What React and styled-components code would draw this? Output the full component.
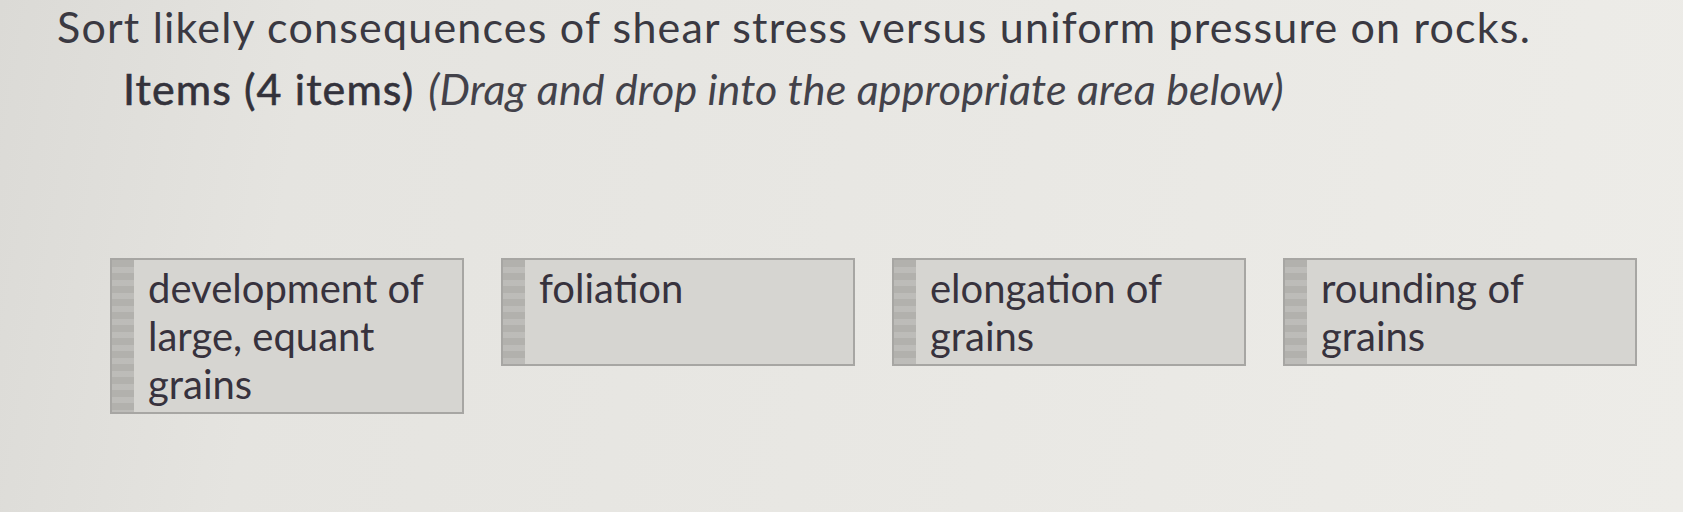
import styled, { createGlobalStyle } from 'styled-components';

const GlobalStyle = createGlobalStyle`
  html, body {
    margin: 0;
    padding: 0;
  }
  body {
    background: #e7e6e2;
    font-family: Lato, "Open Sans", sans-serif;
  }
`;

const Page = styled.div`
  width: 1683px;
  height: 512px;
  box-sizing: border-box;
  padding: 3px 0 0 57px;
  background: linear-gradient(100deg, #dbdad6 0%, #e5e4e0 18%, #e9e8e4 60%, #edece8 100%);
  overflow: hidden;
`;

const Question = styled.h1`
  margin: 0;
  font-size: 43px;
  line-height: 48px;
  font-weight: 400;
  color: #3a3942;
  letter-spacing: 1.2px;
  white-space: nowrap;
`;

const ItemsHeading = styled.h2`
  margin: 14px 0 0 66px;
  font-size: 43px;
  line-height: 48px;
  font-weight: 400;
  color: #33323b;
  letter-spacing: 1.1px;
  white-space: nowrap;
  -webkit-text-stroke: 0.6px #33323b;

  em {
    margin-left: 2px;
    color: #43424a;
    letter-spacing: 0.15px;
    -webkit-text-stroke: 0;
  }
`;

const Tray = styled.div`
  display: flex;
  align-items: flex-start;
  gap: 37px;
  margin: 145px 0 0 53px;
`;

const Card = styled.div`
  display: flex;
  width: 354px;
  min-height: 108px;
  box-sizing: border-box;
  border: 2px solid #a7a6a3;
  background: #d6d5d1;
`;

const Grip = styled.div`
  flex: 0 0 22px;
  background:
    repeating-linear-gradient(180deg, transparent 0 7px, rgba(255, 255, 255, 0.14) 7px 13px),
    #b2b1ad;
`;

const Label = styled.div`
  padding: 4px 14px 4px 14px;
  font-size: 40px;
  line-height: 48px;
  color: #37323d;
`;

const items = [
  'development of large, equant grains',
  'foliation',
  'elongation of grains',
  'rounding of grains',
];

export default function App() {
  return (
    <Page>
      <GlobalStyle />
      <Question>Sort likely consequences of shear stress versus uniform pressure on rocks.</Question>
      <ItemsHeading>
        Items (4 items) <em>(Drag and drop into the appropriate area below)</em>
      </ItemsHeading>
      <Tray>
        {items.map((text) => (
          <Card key={text}>
            <Grip />
            <Label>{text}</Label>
          </Card>
        ))}
      </Tray>
    </Page>
  );
}
